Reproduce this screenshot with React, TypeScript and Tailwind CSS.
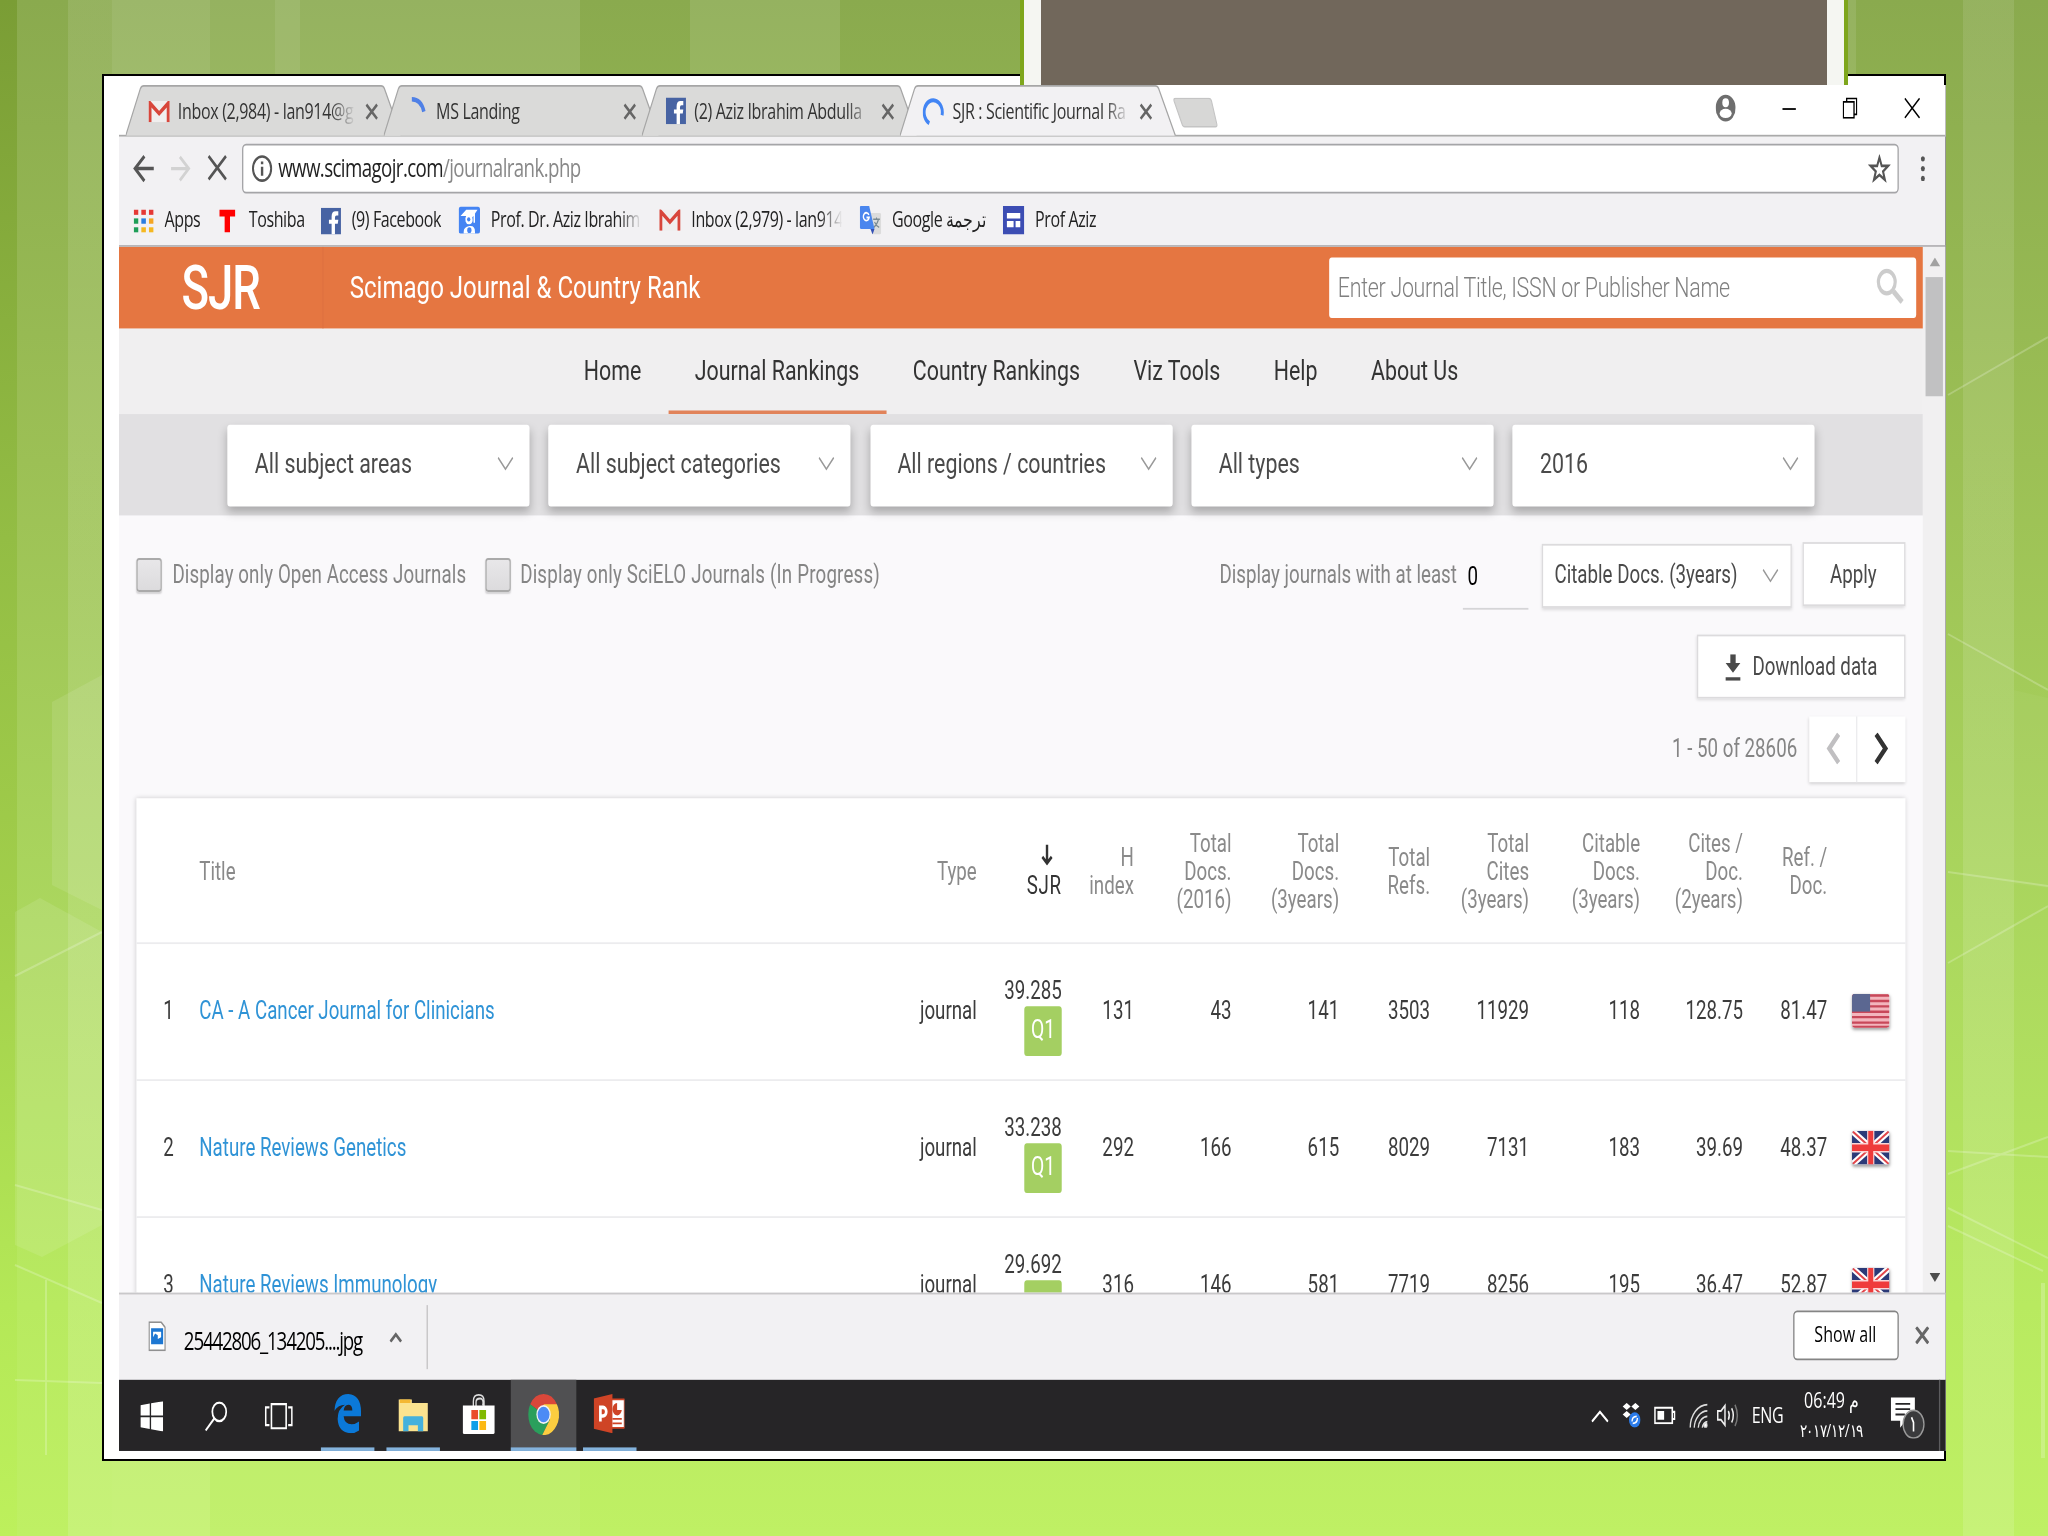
import { type ReactNode } from 'react'

const filters = ['All subject areas', 'All subject categories', 'All regions / countries', 'All types', '2016']
const navItems = ['Home', 'Journal Rankings', 'Country Rankings', 'Viz Tools', 'Help', 'About Us']

const columns = [
  { label: ['Type'], width: 'w-[60px]' },
  { label: ['SJR'], width: 'w-[63.5px]', sorted: true },
  { label: ['H', 'index'], width: 'w-[54px]' },
  { label: ['Total', 'Docs.', '(2016)'], width: 'w-[73px]' },
  { label: ['Total', 'Docs.', '(3years)'], width: 'w-[80.5px]' },
  { label: ['Total', 'Refs.'], width: 'w-[68px]' },
  { label: ['Total', 'Cites', '(3years)'], width: 'w-[74px]' },
  { label: ['Citable', 'Docs.', '(3years)'], width: 'w-[83px]' },
  { label: ['Cites /', 'Doc.', '(2years)'], width: 'w-[77px]' },
  { label: ['Ref. /', 'Doc.'], width: 'w-[63px]' },
]

const journals = [
  { rank: 1, title: 'CA - A Cancer Journal for Clinicians', values: ['journal', '39.285', '131', '43', '141', '3503', '11929', '118', '128.75', '81.47'], quartile: 'Q1', country: 'us' },
  { rank: 2, title: 'Nature Reviews Genetics', values: ['journal', '33.238', '292', '166', '615', '8029', '7131', '183', '39.69', '48.37'], quartile: 'Q1', country: 'uk' },
  { rank: 3, title: 'Nature Reviews Immunology', values: ['journal', '29.692', '316', '146', '581', '7719', '8256', '195', '36.47', '52.87'], quartile: '', country: 'uk' },
]

export default function App() {
  return (
    <div className="relative h-[1536px] w-[2048px] overflow-hidden bg-[#a0c858]">
      <SlideBackground />

      {/* Picture frame on the slide */}
      <div className="absolute left-[102px] top-[74px] h-[1387px] w-[1844px] border-2 border-black bg-white" />

      {/* Slide title tab */}
      <div className="absolute left-[1020px] top-0 flex h-[86px] w-[828px] border-x-4 border-[#7ea61c] bg-[#f5f6f2] px-[17px]">
        <div className="h-full flex-1 bg-[#71675b]" />
      </div>

      {/* Desktop, 1366x768 stretched to 4:3 */}
      <div className="absolute left-[119px] top-[85px] flex h-[768px] w-[1366px] origin-top-left scale-x-[1.3372] scale-y-[1.7786] flex-col overflow-hidden bg-[#f2f1f3] font-['Open_Sans','Noto_Sans',sans-serif] text-[12px] text-[#222]">
        <TabStrip />
        <Toolbar />
        <Bookmarks />
        <div className="flex h-[588px] shrink-0 overflow-hidden">
          <SitePage />
          <Scrollbar />
        </div>
        <DownloadShelf />
        <Taskbar />
      </div>
    </div>
  )
}

function SlideBackground() {
  return (
    <svg className="absolute inset-0" width="2048" height="1536" viewBox="0 0 2048 1536">
      <defs>
        <linearGradient id="slide" x1="0" y1="0" x2="0" y2="1">
          <stop offset="0" stopColor="#8aaa4e" />
          <stop offset="0.3" stopColor="#9cc055" />
          <stop offset="0.6" stopColor="#abd75e" />
          <stop offset="0.85" stopColor="#b8ea60" />
          <stop offset="1" stopColor="#bff064" />
        </linearGradient>
        <linearGradient id="edge" x1="0" y1="0" x2="0" y2="1">
          <stop offset="0" stopColor="#7a9d35" />
          <stop offset="0.35" stopColor="#93bd44" />
          <stop offset="0.6" stopColor="#a2cf4b" />
          <stop offset="0.85" stopColor="#b4e857" />
          <stop offset="1" stopColor="#bdf05c" />
        </linearGradient>
        <linearGradient id="fade" x1="0" y1="0" x2="0" y2="1">
          <stop offset="0" stopColor="#fff" stopOpacity="0.1" />
          <stop offset="1" stopColor="#fff" stopOpacity="0.13" />
        </linearGradient>
      </defs>
      <rect width="2048" height="1536" fill="url(#slide)" />
      <rect width="17" height="1536" fill="url(#edge)" />
      <rect x="68" width="44" height="1536" fill="url(#fade)" />
      <rect x="112" width="98" height="76" fill="#fff" fillOpacity="0.16" />
      <rect x="112" y="1460" width="98" height="76" fill="#fff" fillOpacity="0.14" />
      <rect x="210" width="370" height="76" fill="#fff" fillOpacity="0.1" />
      <rect x="210" y="1460" width="370" height="76" fill="#fff" fillOpacity="0.06" />
      <rect x="275" width="25" height="76" fill="#fff" fillOpacity="0.08" />
      <rect x="690" width="150" height="76" fill="#fff" fillOpacity="0.1" />
      <rect x="1848" width="8" height="76" fill="#fff" fillOpacity="0.1" />
      <rect x="1963" width="51" height="1536" fill="url(#fade)" />
      <g fill="#fff" fillOpacity="0.1">
        <path d="m52 702 50-27v235l-50-25Z" />
        <path d="m15 912 25-14 62 34v293l-60 32-27-12Z" />
        <path d="m2014 690 34 8v190l-34-4Z" fillOpacity="0.04" />
      </g>
      <g fill="none" stroke="#fff" strokeOpacity="0.22" strokeWidth="2">
        <path d="m15 976 87-44M15 1185l87 25M15 1265l87 38M15 1380l87 3M46 1280v175" />
        <path d="m1948 395 100-58M1948 634l100 56M1948 872l100 14M1948 963l100-57M1948 1151l100 6M1948 1174l100-37M1948 1208l100 50M1948 1226l95 45" />
        <path d="M2043 1283v175" strokeWidth="4" />
      </g>
    </svg>
  )
}

/* Browser chrome */

function Tab({ icon, title, active }: { icon: ReactNode; title: string; active?: boolean }) {
  return (
    <div className="relative flex h-[29px] w-[193.1px] shrink-0 items-center">
      <svg className="absolute -left-[13px] top-0" width="207" height="29" viewBox="0 0 207 29">
        <path d="M0 28.500 11 2q.8-1.500 2.500-1.500H191q1.700 0 2.500 1.500L206 28.500" fill={active ? '#f2f1f3' : '#dadad9'} stroke="#a6a6a6" strokeWidth="0.9" />
      </svg>
      <div className="relative ml-[4px] flex w-4 justify-center">{icon}</div>
      <div className="relative ml-[6px] w-[133px] overflow-hidden whitespace-nowrap text-[12px] tracking-[-0.25px] text-[#333] [mask-image:linear-gradient(to_right,black_86%,transparent)]">
        {title}
      </div>
      <svg className="relative ml-[7px]" width="10" height="10" viewBox="0 0 10 10" stroke="#666" strokeWidth="1.700">
        <path d="m1 1 8 8M9 1 1 9" />
      </svg>
    </div>
  )
}

function TabStrip() {
  return (
    <div className="relative flex h-[29px] shrink-0 border-b border-[#aaa] bg-white pl-[18px]">
      <Tab icon={<GmailIcon />} title="Inbox (2,984) - lan914@g" />
      <Tab
        icon={
          <svg className="mb-[4px]" width="16" height="16" viewBox="0 0 16 16" fill="none" stroke="#4f80e6" strokeWidth="2.600">
            <path d="M4 3q7 0 9 7" />
          </svg>
        }
        title="MS Landing"
      />
      <Tab icon={<FacebookIcon />} title="(2) Aziz Ibrahim Abdulla" />
      <Tab
        active
        icon={
          <svg width="16" height="16" viewBox="0 0 16 16" fill="none" stroke="#4285f4" strokeWidth="2.200">
            <path d="M5 14.500A6.800 6.800 0 1 1 14.500 10" />
          </svg>
        }
        title="SJR : Scientific Journal Ra"
      />
      <svg className="ml-[-2px] mt-[7px]" width="34" height="18" viewBox="0 0 34 18">
        <path d="M2 .5h25q1.500 0 2 1.500l4 13q.4 1.500-1 1.500H9q-1.500 0-2-1.500L1 2Q.5.5 2 .5Z" fill="#d7d7d6" stroke="#c4c4c4" strokeWidth="0.800" />
      </svg>
      <div className="ml-auto flex h-[26px] w-[172px] items-center justify-between pr-[18.5px]">
        <svg width="15" height="16" viewBox="0 0 15 16">
          <circle cx="7.500" cy="8" r="7.500" fill="#6e6e6e" />
          <circle cx="7.500" cy="5" r="2.500" fill="#fff" />
          <ellipse cx="7.500" cy="11" rx="4.500" ry="2.600" fill="#fff" />
        </svg>
        <div className="h-px w-[10px] bg-black" />
        <svg width="11" height="12" viewBox="0 0 11 12" fill="none" stroke="#000">
          <path d="M3 2.500v-2h7.500v9H8.500M.5 2.500h8v9h-8Z" />
        </svg>
        <svg width="12" height="12" viewBox="0 0 12 12" stroke="#000">
          <path d="m.5.5 11 11M11.500.5l-11 11" />
        </svg>
      </div>
    </div>
  )
}

function Toolbar() {
  return (
    <div className="flex h-[36px] shrink-0 items-center pb-[1px]">
      <svg className="ml-[9.500px]" width="17" height="16" viewBox="0 0 17 16" fill="none" stroke="#555" strokeWidth="2">
        <path d="M16 8H2M9 1 2 8l7 7" />
      </svg>
      <svg className="ml-[11px]" width="16" height="16" viewBox="0 0 17 16" fill="none" stroke="#d2d2d2" strokeWidth="2">
        <path d="M1 8h14M8 1l7 7-7 7" />
      </svg>
      <svg className="ml-[12px]" width="15" height="15" viewBox="0 0 15 15" stroke="#555" strokeWidth="1.800">
        <path d="m1 1 13 13M14 1 1 14" />
      </svg>
      <div className="ml-[11px] flex h-[28px] w-[1239px] items-center rounded-[3px] border border-[#a5a5a8] bg-white pl-[6px] pr-[5px]">
        <svg width="16" height="16" viewBox="0 0 16 16" fill="none" stroke="#555" strokeWidth="1.500">
          <circle cx="8" cy="8" r="6.800" />
          <path d="M8 7v5M8 4v1.600" strokeWidth="1.800" />
        </svg>
        <div className="ml-[4.5px] flex-1 whitespace-nowrap pt-[1.5px] text-[14px] leading-[20px] tracking-[-0.45px] text-[#222]">
          www.scimagojr.com<span className="text-[#888]">/journalrank.php</span>
        </div>
        <svg width="17" height="16" viewBox="0 0 17 16" fill="none" stroke="#555" strokeWidth="1.500">
          <path d="m8.500 1.800 1.700 4.700h4.800l-3.800 3.100 1.400 4.700-4.100-2.800-4.100 2.800 1.400-4.700L2 6.500h4.800Z" />
        </svg>
      </div>
      <svg className="ml-[16px]" width="4" height="16" viewBox="0 0 4 16" fill="#555">
        <circle cx="2" cy="2.500" r="1.500" />
        <circle cx="2" cy="8" r="1.500" />
        <circle cx="2" cy="13.500" r="1.500" />
      </svg>
    </div>
  )
}

function Bookmark({ icon, label, width, fade }: { icon: ReactNode; label: string; width: string; fade?: boolean }) {
  return (
    <div className={`flex shrink-0 items-center ${width}`}>
      <div className="flex w-4 shrink-0 justify-center">{icon}</div>
      <div className={`ml-[8px] overflow-hidden whitespace-nowrap tracking-[-0.3px] text-[#222] ${fade ? 'w-[113px] [mask-image:linear-gradient(to_right,black_85%,transparent)]' : ''}`}>
        {label}
      </div>
    </div>
  )
}

function Bookmarks() {
  return (
    <div className="flex h-[26px] shrink-0 items-center border-b border-[#b4b2b4] pb-[3px] pl-[10px]">
      <Bookmark width="w-[63px]" icon={<AppsIcon />} label="Apps" />
      <Bookmark
        width="w-[77px]"
        icon={
          <svg width="12" height="13" viewBox="0 0 12 13" fill="#f00">
            <path d="M0 0h12v4H8v9H4V4H0Z" />
          </svg>
        }
        label="Toshiba"
      />
      <Bookmark width="w-[104px]" icon={<FacebookIcon />} label="(9) Facebook" />
      <Bookmark
        width="w-[150px]"
        fade
        icon={
          <svg width="17" height="16" viewBox="0 0 17 16">
            <rect width="17" height="16" rx="1.500" fill="#4484f3" />
            <path d="M1.500 5.500 6 1.800h9L13 4v5.500h-1.200V5.500l-1 .8q1 3-1.300 4-3 .8-4-1.500-.8-2 .5-3.300Z" fill="#fff" />
            <path d="M4 15q0-3 4.500-3.500T13 15v1H4Z" fill="#fff" />
            <circle cx="8" cy="7.500" r="1.300" fill="#4484f3" />
            <circle cx="8.500" cy="14" r="1.700" fill="#4484f3" />
          </svg>
        }
        label="Prof. Dr. Aziz Ibrahim"
      />
      <Bookmark width="w-[150px]" fade icon={<GmailIcon />} label="Inbox (2,979) - lan914" />
      <Bookmark
        width="w-[107px]"
        icon={
          <svg width="16" height="16" viewBox="0 0 16 16">
            <path d="M6 4h9q1 0 1 1v10q0 1-1 1h-5Z" fill="#dcdcdc" />
            <path d="M10 7.500h5M12.500 6.500v1M14 7.500q-1 3-3.500 4.500M11 9q1 2 3.500 3" stroke="#7a8a92" strokeWidth="0.800" fill="none" />
            <path d="M1 0h6l4 13H1q-1 0-1-1V1q0-1 1-1Z" fill="#4a86ee" />
            <path d="m8 13 3 0-1.500 3Z" fill="#3551b5" />
            <path d="M6.800 5A2.200 2.200 0 1 0 7 6.500H5" stroke="#fff" fill="none" />
          </svg>
        }
        label="Google ترجمة"
      />
      <Bookmark
        width="w-[80px]"
        icon={
          <svg width="16" height="16" viewBox="0 0 16 16">
            <path d="M0 0h16v16H0Z" fill="#3c4db3" />
            <path d="M3 4h10v3H3ZM3 8.500h5v3.500H3ZM9.500 8.500H13V12H9.500Z" fill="#fff" />
          </svg>
        }
        label="Prof Aziz"
      />
    </div>
  )
}

function Scrollbar() {
  return (
    <div className="flex w-[17px] shrink-0 flex-col items-center bg-[#f1f0f1] pt-[6px]">
      <svg width="8" height="5" viewBox="0 0 8 5" fill="#a2a2a2">
        <path d="M4 0 8 5H0Z" />
      </svg>
      <div className="mt-[6px] h-[67px] w-[13px] bg-[#c1c1c2]" />
      <svg className="mb-[6px] mt-auto" width="8" height="5" viewBox="0 0 8 5" fill="#4d4d4d">
        <path d="M0 0h8L4 5Z" />
      </svg>
    </div>
  )
}

/* Scimago page */

function Chevron() {
  return (
    <svg width="12" height="8" viewBox="0 0 12 8" fill="none" stroke="#999" strokeWidth="1">
      <path d="m.5.5 5.500 6.500L11.500.5" />
    </svg>
  )
}

function SitePage() {
  return (
    <div className="flex w-[1349px] shrink-0 flex-col bg-[#faf9fb] font-['Roboto',sans-serif]">
      <header className="flex h-[46px] shrink-0 items-center bg-[#e57641] pr-[5.5px]">
        <div className="flex h-full w-[153px] items-center justify-center border-r border-[#df7241] pt-[1px] text-[34px] font-medium tracking-[-0.8px] text-white">
          SJR
        </div>
        <div className="ml-[19.5px] whitespace-nowrap pb-[1.5px] text-[18px] text-white">Scimago Journal &amp; Country Rank</div>
        <div className="ml-auto flex h-[34px] w-[439px] items-center justify-between rounded-[2px] bg-white pb-[1px] pl-[7px] pr-[9px]">
          <span className="whitespace-nowrap text-[16px] font-light tracking-[-0.22px] text-[#808080]">Enter Journal Title, ISSN or Publisher Name</span>
          <svg className="mb-[2px]" width="21" height="20" viewBox="0 0 21 20" fill="none" stroke="#ccc">
            <circle cx="8" cy="7.800" r="6.300" strokeWidth="2.400" />
            <path d="m13 13 6.500 6" strokeWidth="3.200" />
          </svg>
        </div>
      </header>

      <nav className="flex h-[48px] shrink-0 bg-[#f0eff0] pl-[327.5px]">
        {navItems.map((item) => (
          <div
            key={item}
            className={`flex h-full items-center whitespace-nowrap border-b-2 px-[20px] pt-[2px] text-[16px] text-[#333] ${
              item === 'Journal Rankings' ? 'border-[#e1835a]' : 'border-transparent'
            }`}
          >
            {item}
          </div>
        ))}
      </nav>

      <div className="flex h-[57px] shrink-0 gap-[14.3px] bg-[#e1e0e2] pl-[81px] pt-[6px]">
        {filters.map((filter) => (
          <div key={filter} className="flex h-[46px] w-[226px] items-center justify-between rounded-[2px] bg-white pb-[2px] pl-[20.5px] pr-[12px] shadow-[0_3px_6px_rgba(0,0,0,0.25)]">
            <span className="whitespace-nowrap text-[16px] text-[#4a4a4a]">{filter}</span>
            <Chevron />
          </div>
        ))}
      </div>

      {/* Options row */}
      <div className="mt-[15px] flex h-[36px] shrink-0 items-center pl-[13px] text-[14px] text-[#858585]">
        <Checkbox />
        <span className="ml-[8px] w-[220px] whitespace-nowrap tracking-[0.07px]">Display only Open Access Journals</span>
        <span className="ml-[14px] flex"><Checkbox /></span>
        <span className="ml-[7px] whitespace-nowrap tracking-[0.14px]">Display only SciELO Journals (In Progress)</span>
        <span className="ml-auto whitespace-nowrap">Display journals with at least</span>
        <div className="ml-[4px] mt-[4px] flex h-[36px] w-[49px] items-center border-b border-[#d5d5d7] pb-[1px] pl-[4px] text-black">0</div>
        <div className="ml-[10px] mt-[1px] flex h-[36px] w-[187px] items-center justify-between border border-[#dcdbdd] bg-white pl-[9px] pr-[9px] text-[#4a4a4a] shadow-[0_1px_2px_rgba(0,0,0,0.12)]">
          <span className="whitespace-nowrap">Citable Docs. (3years)</span>
          <Chevron />
        </div>
        <div className="ml-[8px] mr-[13.5px] flex h-[36px] w-[77px] items-center justify-center border border-[#dcdbdd] bg-white text-[#4a4a4a] shadow-[0_1px_2px_rgba(0,0,0,0.12)]">
          Apply
        </div>
      </div>

      <div className="mr-[13.5px] mt-[16px] flex h-[36px] w-[156px] shrink-0 items-center self-end border border-[#dcdbdd] bg-white pl-[20px] text-[14px] text-[#4a4a4a] shadow-[0_1px_2px_rgba(0,0,0,0.12)]">
        <svg width="12" height="15" viewBox="0 0 12 15" fill="#4a4a4a">
          <path d="M4 0h4v5h3.500L6 10.500.5 5H4ZM.5 13h11v2H.5Z" />
        </svg>
        <span className="ml-[9px] whitespace-nowrap">Download data</span>
      </div>

      <div className="mr-[13px] mt-[9.5px] flex h-[37px] shrink-0 items-center self-end text-[14px] text-[#858585]">
        <span className="mr-[9px] whitespace-nowrap">1 - 50 of 28606</span>
        <div className="flex h-full bg-white shadow-[0_1px_2px_rgba(0,0,0,0.16)]">
          <div className="flex w-[36px] items-center justify-center border-r border-[#ececee]">
            <svg width="12" height="18" viewBox="0 0 12 18" fill="none" stroke="#c0bfc1" strokeWidth="3">
              <path d="M10 1 3 9l7 8" />
            </svg>
          </div>
          <div className="flex w-[36px] items-center justify-center">
            <svg width="12" height="18" viewBox="0 0 12 18" fill="none" stroke="#333" strokeWidth="3">
              <path d="m2 1 7 8-7 8" />
            </svg>
          </div>
        </div>
      </div>

      {/* Rankings table */}
      <div className="ml-[13px] mt-[9.5px] w-[1323px] shrink-0 bg-white text-[14px] shadow-[0_0_3px_rgba(0,0,0,0.18)]">
        <div className="flex h-[80.5px] items-center pt-[2px] text-[#8a8a8a]">
          <div className="ml-[47px] w-[521.5px]">Title</div>
          {columns.map((column, i) => (
            <div key={i} className={`shrink-0 text-right leading-[16px] ${column.width}`}>
              {column.sorted && (
                <svg className="mb-[3px] ml-auto mr-[6px]" width="10" height="12" viewBox="0 0 10 12" fill="none" stroke="#333" strokeWidth="1.800">
                  <path d="M5 0v10M1.500 7 5 10.500 8.500 7" />
                </svg>
              )}
              {column.label.map((line) => (
                <div key={line} className={column.sorted ? 'tracking-[0.5px] text-[#333]' : ''}>{line}</div>
              ))}
            </div>
          ))}
        </div>
        {journals.map((journal) => (
          <div key={journal.rank} className="flex h-[77px] items-center border-t border-[#ececee] pb-[1px] text-[#3c3c3c]">
            <div className="w-[28px] text-right">{journal.rank}</div>
            <div className="ml-[19px] w-[521.5px] whitespace-nowrap text-[#2f93d6]">{journal.title}</div>
            {journal.values.map((value, i) => (
              <div key={i} className={`flex shrink-0 flex-col items-end ${columns[i].width}`}>
                <span className={i === 1 ? 'mt-[6px] leading-[18px]' : 'leading-[18px]'}>{value}</span>
                {i === 1 && (
                  <span className="flex h-[28px] w-[28px] items-center justify-center rounded-[2px] bg-[#a4cf62] text-[14.5px] text-white">{journal.quartile}</span>
                )}
              </div>
            ))}
            <div className="ml-[18.5px]">{journal.country === 'us' ? <UsFlag /> : <UkFlag />}</div>
          </div>
        ))}
      </div>
    </div>
  )
}

function Checkbox() {
  return <span className="block h-[19px] w-[19px] rounded-[2px] border border-[#aaa] bg-gradient-to-b from-[#e8e7e9] to-[#dcdbdd] shadow-[0_1px_1px_rgba(0,0,0,0.15)]" />
}

function UsFlag() {
  return (
    <svg width="28" height="19" viewBox="0 0 29 20" preserveAspectRatio="none" className="rounded-[2px] shadow-[0_1px_2px_rgba(0,0,0,0.35)]">
      <rect width="29" height="20" fill="#f3b5bd" />
      <path d="M0 1h29M0 4.200h29M0 7.400h29M0 10.600h29M0 13.800h29M0 17h29M0 19.500h29" stroke="#c8485a" strokeWidth="1.400" />
      <rect width="14" height="10.500" fill="#5b6791" />
    </svg>
  )
}

function UkFlag() {
  return (
    <svg width="28" height="19" viewBox="0 0 29 20" preserveAspectRatio="none" className="rounded-[2px] shadow-[0_1px_2px_rgba(0,0,0,0.35)]">
      <rect width="29" height="20" fill="#2c3a78" />
      <path d="m0 0 29 20M29 0 0 20" stroke="#fff" strokeWidth="4" />
      <path d="m0 0 29 20M29 0 0 20" stroke="#e2474b" strokeWidth="1.300" />
      <path d="M14.500 0v20M0 10h29" stroke="#fbd5d5" strokeWidth="5.600" />
      <path d="M14.500 0v20M0 10h29" stroke="#ef3b3b" strokeWidth="3.800" />
    </svg>
  )
}

/* Download shelf and taskbar */

function DownloadShelf() {
  return (
    <div className="flex h-[49px] shrink-0 items-center border-t border-[#c9c8ca] bg-[#f2f1f3]">
      <svg className="mb-[2px] ml-[21.5px]" width="13" height="17" viewBox="0 0 13 17">
        <path d="M.5.5h9l3 3v13H.5Z" fill="#fff" stroke="#909090" />
        <rect x="2" y="4" width="9" height="9" fill="#1d77d2" />
        <path d="M3.500 6v3l1.500-2 2 1v2l2.500-1V6Z" fill="#fff" />
      </svg>
      <span className="ml-[14px] w-[135px] whitespace-nowrap pt-[3px] text-[14px] tracking-[-0.88px] text-black">25442806_134205....jpg</span>
      <svg className="ml-[18px]" width="10" height="6" viewBox="0 0 10 6" fill="none" stroke="#666" strokeWidth="1.800">
        <path d="m1 5.500 4-4 4 4" />
      </svg>
      <div className="ml-[18px] h-[36px] w-px bg-[#c4c3c5]" />
      <div className="mb-[3px] ml-auto flex h-[28px] w-[79px] items-center justify-center rounded-[3px] border border-[#858585] bg-white text-black">
        Show all
      </div>
      <svg className="mb-[3px] ml-[12px] mr-[12.5px]" width="11" height="10" viewBox="0 0 11 10" stroke="#666" strokeWidth="2">
        <path d="m1 .5 9 9M10 .5l-9 9" />
      </svg>
    </div>
  )
}

function TaskItem({ children, running, active }: { children: ReactNode; running?: boolean; active?: boolean }) {
  return (
    <div className={`flex h-full w-[49px] flex-col items-center ${active ? 'bg-[#505052]' : ''}`}>
      <div className="flex flex-1 items-center justify-center">{children}</div>
      {running && <div className={`h-[2px] bg-[#84b3dd] ${active ? 'w-full' : 'w-[40px]'}`} />}
    </div>
  )
}

function Taskbar() {
  return (
    <div className="flex h-[40px] shrink-0 items-center bg-[#262527] text-white">
      <div className="flex h-full w-[146px] items-center pl-[16px]">
        <svg width="17" height="17" viewBox="0 0 17 17" fill="#fff">
          <path d="M0 2.300 7 1.300V8H0ZM8 1.200 17 0v8H8ZM0 9h7v6.700L0 14.700ZM8 9h9v8l-9-1.200Z" />
        </svg>
        <svg className="ml-[30.5px]" width="17" height="17" viewBox="0 0 17 17" fill="none" stroke="#fff" strokeWidth="1.300">
          <circle cx="11" cy="6" r="5.200" />
          <path d="M7.300 9.700.8 16.500" />
        </svg>
        <svg className="ml-[28.5px]" width="21" height="15" viewBox="0 0 21 15" fill="none" stroke="#fff" strokeWidth="1.200">
          <path d="M5 .7h11v13.600H5ZM3.500 2.500H.7v10h2.800M17.500 2.500h2.800v10h-2.800" />
        </svg>
      </div>
      <div className="flex h-full">
        <TaskItem running><EdgeIcon /></TaskItem>
        <TaskItem running>
          <svg width="22" height="19" viewBox="0 0 22 19">
            <path d="M0 1h10v2h12v16H0Z" fill="#fbe38f" />
            <path d="M1 1h8v2H1Z" fill="#f4b834" />
            <path d="M3.500 19v-7.500q0-1 1-1h13q1 0 1 1V19h-4v-3.500h-7V19Z" fill="#45b1dc" />
          </svg>
        </TaskItem>
        <TaskItem>
          <svg className="mb-[2px]" width="24" height="23" viewBox="0 0 24 23">
            <path d="M8 7V4q0-3.500 4-3.500T16 4v3M10 7V4.500q0-2 3-2t2 4" stroke="#ddd" fill="none" />
            <path d="M0 6.500h24v15q0 1-1 1H1q-1 0-1-1Z" fill="#fff" />
            <path d="M6.500 9h5v5.200h-5Z" fill="#ea4d2c" />
            <path d="M12.500 9h5v5.200h-5Z" fill="#80b900" />
            <path d="M6.500 15.200h5v5h-5Z" fill="#0f9fe8" />
            <path d="M12.500 15.200h5v5h-5Z" fill="#fcb813" />
          </svg>
        </TaskItem>
        <TaskItem running active>
          <svg width="23" height="23" viewBox="0 0 24 24">
            <path d="M12 12 1.600 6A12 12 0 0 1 22.400 6Z" fill="#d9473a" />
            <path d="M12 12 1.600 6A12 12 0 0 0 11 24l6-9Z" fill="#2a9f5c" />
            <path d="M12 6h10.400A12 12 0 0 1 11 24l6-9Z" fill="#fccd40" />
            <circle cx="12" cy="12" r="5.600" fill="#f2f2f2" />
            <circle cx="12" cy="12" r="4.600" fill="#4c8bf5" />
          </svg>
        </TaskItem>
        <TaskItem running>
          <svg width="23" height="22" viewBox="0 0 23 22">
            <path d="M12 3h11v16H12Z" fill="#fff" stroke="#cf4426" />
            <path d="M14 14h7M14 16.500h7" stroke="#cf4426" />
            <path d="M17.500 5a3.500 3.500 0 1 0 3.500 4h-3.500Z" fill="#cf4426" />
            <path d="M0 2.500 14 0v22L0 19.500Z" fill="#cf4426" />
            <path d="M5 15.500v-8h2a2.300 2.300 0 0 1 0 4.800H5" stroke="#fff" strokeWidth="2" fill="none" />
          </svg>
        </TaskItem>
      </div>

      {/* Tray */}
      <div className="ml-auto flex h-full items-center">
        <svg width="13" height="7" viewBox="0 0 13 7" fill="none" stroke="#fff" strokeWidth="1.400">
          <path d="m.5 6.500 6-5.500 6 5.500" />
        </svg>
        <svg className="ml-[10.5px]" width="14" height="14" viewBox="0 0 14 14">
          <path d="m3.500 0 3 2-3 2-3-2ZM10 0l3 2-3 2-3-2ZM3.500 4.500l3 2-3 2-3-2ZM6 8l2 1-2 2Z" fill="#fff" />
          <circle cx="9.500" cy="9.500" r="4.300" fill="#2a7bea" />
          <path d="M7.500 10.500q0-3 3.500-3M11.500 8.500q0 3-3.500 3" stroke="#fff" fill="none" />
        </svg>
        <svg className="ml-[10px]" width="16" height="10" viewBox="0 0 16 10">
          <path d="M.6.6h13v8.800H.6ZM14 3h1.400v4H14" stroke="#fff" strokeWidth="1.200" fill="none" />
          <path d="M2.500 2.500h5v5h-5Z" fill="#fff" />
        </svg>
        <svg className="ml-[9.5px]" width="14" height="14" viewBox="0 0 14 14" fill="none" stroke="#ddd">
          <path d="M1 14A13 13 0 0 1 14 1M4 14A10 10 0 0 1 14 4.500M7 14a7 7 0 0 1 7-6.500M10 14a4 4 0 0 1 4-3.500" />
          <circle cx="12.500" cy="12.500" r="1.200" fill="#fff" />
        </svg>
        <svg className="ml-[7.5px]" width="17" height="14" viewBox="0 0 17 14" fill="none" stroke="#eee" strokeWidth="1.100">
          <path d="M.6 4.500H3L6 1.500v11L3 9.500H.6ZM8.500 4.500q1.500 2.500 0 5M11 3q2.500 4 0 8" />
          <path d="M13.500 1q3.500 6 0 12" stroke="#777" />
        </svg>
        <span className="ml-[8.5px] text-[12px] tracking-[-0.3px]">ENG</span>
        <div className="ml-[9px] flex w-[54px] flex-col items-center text-[12px] leading-[17px] tracking-[-0.6px]">
          <span className="whitespace-nowrap">06:49 م</span>
          <span className="whitespace-nowrap text-[10px]">٢٠١٧/١٢/١٩</span>
        </div>
        <svg className="ml-[17.5px]" width="26" height="26" viewBox="0 0 26 26">
          <path d="M0 3h18v13H11l-4 4v-4H0Z" fill="#fff" />
          <path d="M3.500 6.500h11M3.500 9.500h11M3.500 12.500h7" stroke="#262527" />
          <circle cx="17" cy="18" r="7.800" fill="#3a3a3c" stroke="#999" />
          <path d="m15.500 14 1.500 3v5" stroke="#fff" fill="none" strokeWidth="1.200" />
        </svg>
        <div className="ml-[10px] mr-[4px] h-full w-px bg-[#5c5c5e]" />
      </div>
    </div>
  )
}

/* Icons */

function EdgeIcon() {
  return (
    <svg width="20" height="22" viewBox="0 0 20 22" fill="#0b79d8">
      <path d="M0 9.500Q1 0 10.500 0 20 .5 20 10v2.500H7q.5 4.500 6 4.500 3 0 5.500-1.500v5Q16 22 12 22 3 21.500 2.500 14 2.500 8.500 8 6 3 6 0 9.500ZM7 9.200h6.500Q13.500 6 10.500 6 7.500 6.200 7 9.200Z" />
    </svg>
  )
}

function FacebookIcon() {
  return (
    <svg width="15" height="15" viewBox="0 0 15 15">
      <path d="M0 0h15v15H0Z" fill="#4763a3" />
      <path d="M8 15V9H6V6.800h2V5q0-3 3-3h2v2.400h-1.300q-1.200 0-1.200 1.200v1.200H13L12.600 9h-2.100v6Z" fill="#fff" />
    </svg>
  )
}

function GmailIcon() {
  return (
    <svg width="16" height="12" viewBox="0 0 16 12">
      <rect width="16" height="12" rx="1" fill="#f0eeee" />
      <path d="M1.200 12V1.200L8 7l6.800-5.800V12" fill="none" stroke="#d8463b" strokeWidth="2.200" />
    </svg>
  )
}

function AppsIcon() {
  const colors = ['#e53935', '#e53935', '#e53935', '#1e9e57', '#2b7de0', '#f5a623', '#1e9e57', '#f5b821', '#f5b821']
  return (
    <svg width="15" height="13" viewBox="0 0 15 13">
      {colors.map((color, i) => (
        <rect key={i} x={(i % 3) * 5.7} y={Math.floor(i / 3) * 5} width="3.400" height="3" fill={color} />
      ))}
    </svg>
  )
}
